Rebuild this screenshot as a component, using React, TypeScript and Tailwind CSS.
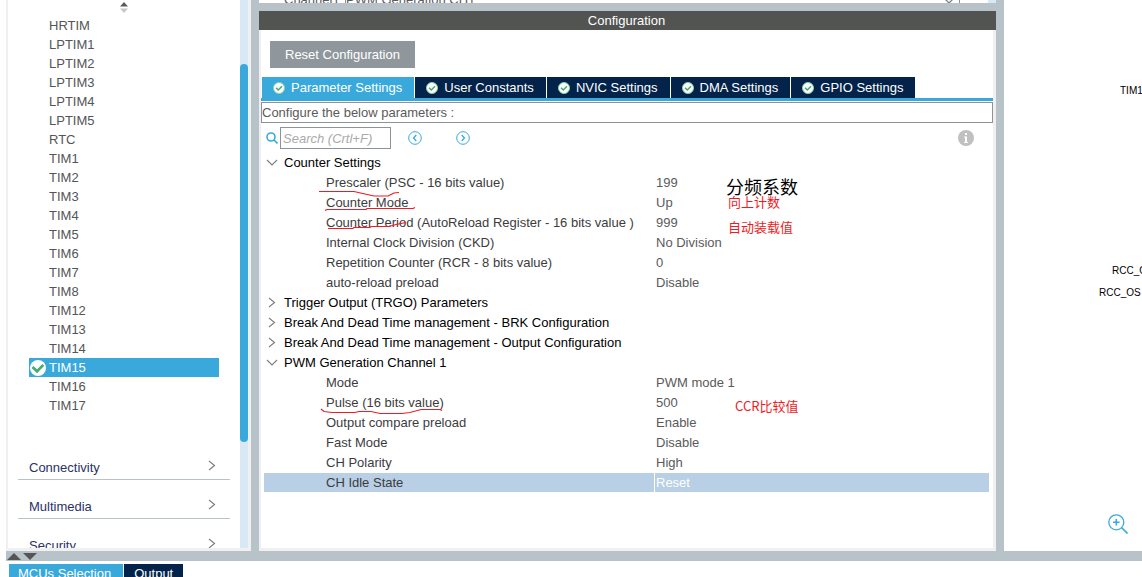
import React, { useState } from "react";

const timers = [
    "HRTIM", "LPTIM1", "LPTIM2", "LPTIM3", "LPTIM4", "LPTIM5", "RTC",
    "TIM1", "TIM2", "TIM3", "TIM4", "TIM5", "TIM6", "TIM7", "TIM8",
    "TIM12", "TIM13", "TIM14", "TIM15", "TIM16", "TIM17",
];

const categories = ["Connectivity", "Multimedia", "Security"];

const tabs = ["Parameter Settings", "User Constants", "NVIC Settings", "DMA Settings", "GPIO Settings"];

type Group = { name: string; open: boolean; params: [string, string][] };

const initialGroups: Group[] = [
    {
        name: "Counter Settings",
        open: true,
        params: [
            ["Prescaler (PSC - 16 bits value)", "199"],
            ["Counter Mode", "Up"],
            ["Counter Period (AutoReload Register - 16 bits value )", "999"],
            ["Internal Clock Division (CKD)", "No Division"],
            ["Repetition Counter (RCR - 8 bits value)", "0"],
            ["auto-reload preload", "Disable"],
        ],
    },
    { name: "Trigger Output (TRGO) Parameters", open: false, params: [] },
    { name: "Break And Dead Time management - BRK Configuration", open: false, params: [] },
    { name: "Break And Dead Time management - Output Configuration", open: false, params: [] },
    {
        name: "PWM Generation Channel 1",
        open: true,
        params: [
            ["Mode", "PWM mode 1"],
            ["Pulse (16 bits value)", "500"],
            ["Output compare preload", "Enable"],
            ["Fast Mode", "Disable"],
            ["CH Polarity", "High"],
            ["CH Idle State", "Reset"],
        ],
    },
];

function Chevron({ down = false }: { down?: boolean }) {
    return (
        <svg width="12" height="12" viewBox="0 0 12 12" fill="none" stroke="#808080" strokeWidth="1.2">
            <path d={down ? "M1 3 6 8 11 3" : "M3 1 8.5 5.5 3 10"} />
        </svg>
    );
}

function TabCheck() {
    return (
        <svg width="12" height="12" viewBox="0 0 12 12">
            <circle cx="6" cy="6" r="5.5" fill="#fff" stroke="#8fcfa8" />
            <path d="M3 5.8 5.3 8 9 4.3" fill="none" stroke="#3fae6b" strokeWidth="1.5" />
        </svg>
    );
}

function Sidebar() {
    const [selected, setSelected] = useState("TIM15");

    return (
        <aside className="flex w-[245px] shrink-0 overflow-hidden border-b-[3px] border-l-2 border-r-[3px] border-[#f0f0f0]">
            <div className="min-w-0 flex-1 overflow-hidden">
                <div className="flex h-4 justify-center pt-[2px]">
                    <svg width="8" height="11" viewBox="0 0 8 11">
                        <path d="M0 4.5 4 0 8 4.5z" fill="#5a5a5a" />
                        <path d="M0 6.5h8L4 11z" fill="#c8c8c8" />
                    </svg>
                </div>
                <ul className="pl-[21px] pr-[21px]">
                    {timers.map((t) => (
                        <li key={t}>
                            <button
                                onClick={() => setSelected(t)}
                                className={`flex h-[19px] w-full items-center gap-[3px] text-left ${t === selected ? "bg-[#39a9dc] text-white" : "text-[#555]"}`}
                            >
                                <span className="flex w-[17px] justify-end">
                                    {t === selected && (
                                        <svg width="16" height="16" viewBox="0 0 16 16" className="shrink-0">
                                            <circle cx="8" cy="8" r="8" fill="#fff" />
                                            <path d="M2.5 7 7 11.3 13.3 4.8" fill="none" stroke="#3fae6b" strokeWidth="2.6" />
                                        </svg>
                                    )}
                                </span>
                                {t}
                            </button>
                        </li>
                    ))}
                </ul>
                <div className="mt-[26px] px-[10px]">
                    {categories.map((c) => (
                        <button
                            key={c}
                            className="flex h-[39px] w-full items-end justify-between border-b border-[#b8c3c9] pb-[3px] pl-[11px] pr-3 text-left text-[#2a3266]"
                        >
                            {c}
                            <span className="pb-1">
                                <Chevron />
                            </span>
                        </button>
                    ))}
                </div>
            </div>
            <div className="w-2 shrink-0 bg-[#d9e8f5] pt-16">
                <div className="h-[378px] rounded-full bg-[#39a9dc]" />
            </div>
        </aside>
    );
}

// notes and pen strokes drawn over the parameter tree
function Annotations() {
    return (
        <div className="pointer-events-none absolute inset-0 font-['Noto_Sans_CJK_SC',sans-serif] text-[#ed1c24]">
            <svg width="400" height="270" viewBox="0 0 400 270" fill="none" stroke="#ed1c24" strokeWidth="1.2">
                <path d="M55 38.5H90L101 41 110 43H124L130 40 135 39.5" />
                <path d="M61 57.5 63 56.5H102L103 55.5H149L151 54.5" />
                <path d="M64 75.5H89L90 74.5H106L107 73.5H125L132 71.5 142 69.5" />
                <path d="M57 256 60 258.5 68 259.5H91L95 258.5H107L116 260.5H138L146 259.5 157 256.5H176L178 257.5" />
            </svg>
            <span className="absolute left-[462px] top-6 text-lg/none text-black">分频系数</span>
            <span className="absolute left-[464px] top-[43px] leading-3">向上计数</span>
            <span className="absolute left-[464px] top-[68px] leading-3">自动装载值</span>
            <span className="absolute left-[471px] top-[247px] leading-3">CCR比较值</span>
        </div>
    );
}

function ParameterTree() {
    const [groups, setGroups] = useState(initialGroups);
    const [selected, setSelected] = useState("CH Idle State");

    const toggle = (name: string) => {
        setGroups(groups.map((g) => (g.name === name ? { ...g, open: !g.open } : g)));
    };

    return (
        <div className="relative ml-[3px] mr-1">
            <table className="w-full table-fixed border-separate border-spacing-0 text-left">
                <colgroup>
                    <col className="w-[390px]" />
                    <col />
                </colgroup>
                <tbody>
                    {groups.map((g) => (
                        <React.Fragment key={g.name}>
                            <tr>
                                <th colSpan={2} className="h-5 p-0 font-normal text-black">
                                    <button onClick={() => toggle(g.name)} className="flex h-5 items-center gap-[6px] pl-[2px]">
                                        <Chevron down={g.open} />
                                        {g.name}
                                    </button>
                                </th>
                            </tr>
                            {g.open && g.params.map(([label, value]) => (
                                <tr
                                    key={label}
                                    onClick={() => setSelected(label)}
                                    className={label === selected ? "text-white" : "text-[#5a5a5a]"}
                                >
                                    <th className={`h-5 border-b border-white bg-clip-padding p-0 pl-[62px] font-normal leading-[19px] text-[#3c3c3c] ${label === selected ? "bg-[#b8cfe5]" : ""}`}>
                                        {label}
                                    </th>
                                    <td className={`h-5 border-b border-l border-white bg-clip-padding p-0 pl-px leading-[19px] ${label === selected ? "bg-[#b8cfe5]" : ""}`}>
                                        {value}
                                    </td>
                                </tr>
                            ))}
                        </React.Fragment>
                    ))}
                </tbody>
            </table>
            <Annotations />
        </div>
    );
}

function Configuration() {
    const [active, setActive] = useState(tabs[0]);

    return (
        <main className="flex min-w-0 flex-1 flex-col border-x-8 border-[#b8c3c9]">
            {/* tail of the mode panel above the splitter */}
            <div className="flex h-[3px] items-end overflow-hidden pl-[25px] text-[#5a5a5a]">
                <label htmlFor="channel" className="-mb-[5px] w-[61px] leading-4">Channel1</label>
                <select id="channel" className="-mb-[5px] h-4 flex-1 appearance-none border-l border-[#8c949a] leading-4">
                    <option>PWM Generation CH1</option>
                </select>
                <svg width="10" height="8" viewBox="0 0 10 8" fill="none" stroke="#808080" strokeWidth="1.3" className="-mb-px shrink-0">
                    <path d="M0 2 5 7 10 2" />
                </svg>
                <div className="ml-[5px] mr-7 h-[3px] w-px bg-[#8c949a]" />
                <div className="h-[3px] w-2 bg-[#d9e8f5]" />
            </div>
            <h1 className="h-[27px] shrink-0 border-t-8 border-[#b8c3c9] bg-[#525452] pr-[2px] text-center leading-[19px] text-white">
                Configuration
            </h1>
            <section className="flex-1 border-b-[3px] border-l-2 border-r-[3px] border-[#f0f0f0]">
                <button className="ml-[9px] mt-[11px] block h-[27px] bg-[#8f979d] px-[15px] text-white">
                    Reset Configuration
                </button>
                <div role="tablist" className="mt-[9px] flex gap-px border-b-[3px] border-[#39a9dc] pl-px">
                    {tabs.map((t) => (
                        <button
                            key={t}
                            role="tab"
                            aria-selected={t === active}
                            onClick={() => setActive(t)}
                            className={`flex h-[21px] items-center gap-[6px] whitespace-nowrap pl-[11px] pr-3 text-white ${t === active ? "bg-[#39a9dc]" : "bg-[#03234b]"}`}
                        >
                            <TabCheck />
                            {t}
                        </button>
                    ))}
                </div>
                <p className="mt-px h-[21px] border border-[#8c949a] leading-[19px] text-[#5a5a5a]">
                    Configure the below parameters :
                </p>
                <div className="mb-1 mt-1 flex h-[22px] items-center pl-[5px] pr-[19px]">
                    <label htmlFor="search" aria-label="Search">
                        <svg width="12" height="12" viewBox="0 0 12 12" fill="none" stroke="#39a9dc" strokeWidth="1.6">
                            <circle cx="5" cy="5" r="4" />
                            <path d="M8 8l3.5 3.5" />
                        </svg>
                    </label>
                    <input
                        id="search"
                        type="text"
                        placeholder="Search (Crtl+F)"
                        className="ml-[2px] h-[22px] w-[111px] border border-[#8c949a] px-[2px] italic outline-none placeholder:text-[#aaa]"
                    />
                    <button aria-label="Previous" className="ml-[17px]">
                        <svg width="14" height="14" viewBox="0 0 14 14" fill="none" stroke="#39a9dc">
                            <circle cx="7" cy="7" r="6.3" />
                            <path d="M8.3 4 5.5 7 8.3 10" strokeWidth="1.3" />
                        </svg>
                    </button>
                    <button aria-label="Next" className="ml-[34px]">
                        <svg width="14" height="14" viewBox="0 0 14 14" fill="none" stroke="#39a9dc">
                            <circle cx="7" cy="7" r="6.3" />
                            <path d="M5.7 4 8.5 7 5.7 10" strokeWidth="1.3" />
                        </svg>
                    </button>
                    <button aria-label="Info" className="ml-auto">
                        <svg width="16" height="16" viewBox="0 0 16 16">
                            <circle cx="8" cy="8" r="8" fill="#c0c0c0" />
                            <path d="M7 3h2v2H7zM6 6.5h3V12h1v1H6v-1h1V7.5H6z" fill="#fff" />
                        </svg>
                    </button>
                </div>
                <ParameterTree />
            </section>
        </main>
    );
}

function Pinout() {
    return (
        <aside className="relative w-[138px] shrink-0 overflow-hidden text-[10px]/3 text-black">
            <span className="absolute left-[116px] top-[85px]">TIM1</span>
            <span className="absolute left-[108px] top-[265px]">RCC_O</span>
            <span className="absolute left-[95px] top-[287px]">RCC_OS</span>
            <button aria-label="Zoom in" className="absolute bottom-[17px] right-[14px]">
                <svg width="20" height="20" viewBox="0 0 20 20" fill="none" stroke="#39a9dc" strokeWidth="1.3">
                    <circle cx="8.3" cy="8.3" r="7.5" />
                    <path d="M5 8.3h6.6M8.3 5v6.6" strokeWidth="1.6" />
                    <path d="M13.7 13.7 19.5 19.5" strokeWidth="1.6" />
                </svg>
            </button>
        </aside>
    );
}

export default function App() {
    return (
        <div className="flex h-screen flex-col overflow-hidden bg-white pl-[6px] font-['Liberation_Sans',Arial,sans-serif] text-[13px]/4">
            <div className="flex min-h-0 flex-1">
                <Sidebar />
                <Configuration />
                <Pinout />
            </div>
            <div className="flex h-[10px] shrink-0 items-center gap-[2px] bg-[#b8c3c9] pl-px">
                <svg width="14" height="7" viewBox="0 0 14 7">
                    <path d="M0 7 7 0 14 7z" fill="#555" />
                </svg>
                <svg width="14" height="7" viewBox="0 0 14 7">
                    <path d="M0 0h14L7 7z" fill="#555" />
                </svg>
            </div>
            <div className="flex h-4 shrink-0 gap-px overflow-hidden pl-[3px] pt-[3px] text-white">
                <button className="h-5 bg-[#39a9dc] pl-[9px] pr-3">MCUs Selection</button>
                <button className="h-5 bg-[#03234b] px-[10px]">Output</button>
            </div>
        </div>
    );
}
